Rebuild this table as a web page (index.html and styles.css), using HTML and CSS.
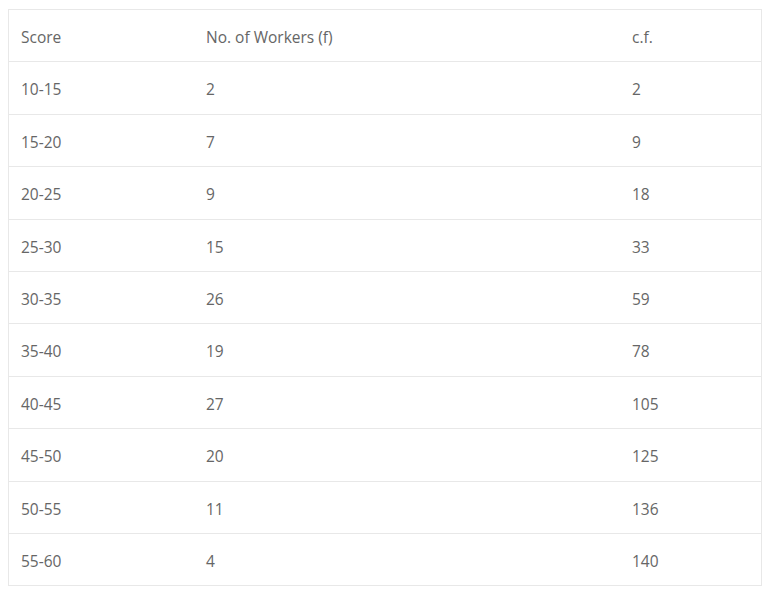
FILE: index.html
```html
<!DOCTYPE html>
<html>
<head>
<meta charset="utf-8">
<link rel="stylesheet" href="styles.css">
</head>
<body>
<table class="data">
  <thead>
    <tr><th class="c1">Score</th><th class="c2">No. of Workers (f)</th><th class="c3">c.f.</th></tr>
  </thead>
  <tbody>
    <tr><td>10-15</td><td>2</td><td>2</td></tr>
    <tr><td>15-20</td><td>7</td><td>9</td></tr>
    <tr><td>20-25</td><td>9</td><td>18</td></tr>
    <tr><td>25-30</td><td>15</td><td>33</td></tr>
    <tr><td>30-35</td><td>26</td><td>59</td></tr>
    <tr><td>35-40</td><td>19</td><td>78</td></tr>
    <tr><td>40-45</td><td>27</td><td>105</td></tr>
    <tr><td>45-50</td><td>20</td><td>125</td></tr>
    <tr><td>50-55</td><td>11</td><td>136</td></tr>
    <tr><td>55-60</td><td>4</td><td>140</td></tr>
  </tbody>
</table>
</body>
</html>
```

FILE: styles.css
```css
html, body {
  margin: 0;
  padding: 0;
  background: #ffffff;
}
body {
  padding: 9px 6px 0 8px;
  font-family: "Open Sans", "Noto Sans", sans-serif;
  font-size: 15.5px;
  color: #666666;
}
.data {
  width: 754px;
  border-collapse: collapse;
  border: 1px solid #e8e8e8;
}
.data th,
.data td {
  text-align: left;
  font-weight: 400;
  padding: 17px 12px 13px;
  line-height: 21.4px;
  border-top: 1px solid #e8e8e8;
  vertical-align: middle;
}
.c1 { width: 161px; }
.c2 { width: 402px; }
```
